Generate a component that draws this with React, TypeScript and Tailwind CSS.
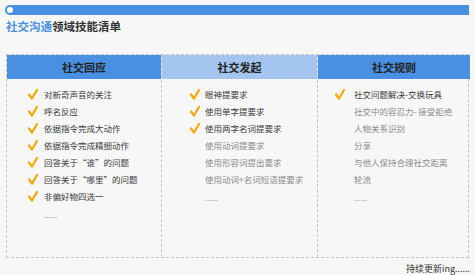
import React from 'react';

type Item = { text: string; done: boolean };

const COLUMNS: { title: string; hatched: boolean; check: string; text: string; items: Item[] }[] = [
  {
    title: '社交回应',
    hatched: false,
    check: 'pl-[21px]',
    text: 'pl-[37px]',
    items: [
      { text: '对新奇声音的关注', done: true },
      { text: '呼名反应', done: true },
      { text: '依据指令完成大动作', done: true },
      { text: '依据指令完成精细动作', done: true },
      { text: '回答关于“谁”的问题', done: true },
      { text: '回答关于“哪里”的问题', done: true },
      { text: '非偏好物四选一', done: true },
    ],
  },
  {
    title: '社交发起',
    hatched: true,
    check: 'pl-[28px]',
    text: 'pl-[43px]',
    items: [
      { text: '眼神提要求', done: true },
      { text: '使用单字提要求', done: true },
      { text: '使用两字名词提要求', done: true },
      { text: '使用动词提要求', done: false },
      { text: '使用形容词提出要求', done: false },
      { text: '使用动词+名词短语提要求', done: false },
    ],
  },
  {
    title: '社交规则',
    hatched: false,
    check: 'pl-[17px]',
    text: 'pl-[36px]',
    items: [
      { text: '社交问题解决-交换玩具', done: true },
      { text: '社交中的容忍力- 接受拒绝', done: false },
      { text: '人物关系识别', done: false },
      { text: '分享', done: false },
      { text: '与他人保持合理社交距离', done: false },
      { text: '轮流', done: false },
    ],
  },
];

function Check() {
  return (
    <svg width="10" height="11" viewBox="0 0 10 11" className="shrink-0">
      <path d="M1 5.5 L4 9.5 L9 1" fill="none" stroke="#f5a800" strokeWidth="2.2" strokeLinecap="round" strokeLinejoin="round" />
    </svg>
  );
}

export default function App() {
  return (
    <div
      className="relative h-[275px] w-[475px] overflow-hidden bg-[#f7f7f7]"
      style={{ fontFamily: '"Noto Sans CJK SC", "Noto Sans", sans-serif' }}
    >
      {/* top bar */}
      <div className="ml-[5px] mt-[5px] flex h-[10px] w-[464px] items-center rounded-l-full bg-[#4a90e2] pl-[2px]">
        <div className="h-[6px] w-[6px] rounded-full bg-white" />
      </div>

      {/* title */}
      <div className="ml-[6px] mt-[3px] text-[11.5px] font-bold leading-[16px] text-[#333]">
        <span className="text-[#4a90e2]">社交沟通</span>领域技能清单
      </div>

      {/* table */}
      <div className="ml-[6px] mt-[20px] grid h-[204px] w-[463px] grid-cols-[154px_156px_153px] border border-dashed border-[#c4c4c4]">
        {COLUMNS.map((col, ci) => (
          <div key={col.title} className={`flex flex-col ${ci > 0 ? 'border-l border-dashed border-[#c4c4c4]' : ''}`}>
            <div
              className={`flex h-[24px] items-center justify-center text-[11px] font-bold text-[#222] ${
                col.hatched
                  ? 'bg-[repeating-linear-gradient(135deg,#a8c8f1_0px,#a8c8f1_2px,#9cc0ee_2px,#9cc0ee_3px)]'
                  : 'bg-[#4a90e2]'
              }`}
            >
              {col.title}
            </div>
            <div className="pt-[7px]">
              {col.items.map((it) => (
                <div key={it.text} className="relative flex h-[17px] items-center">
                  {it.done && (
                    <div className={`absolute left-0 top-[3px] ${col.check}`}>
                      <Check />
                    </div>
                  )}
                  <span
                    className={`${col.text} whitespace-nowrap text-[8.5px] ${it.done ? 'text-[#3a3a3a]' : 'text-[#8a8a8a]'}`}
                  >
                    {it.text}
                  </span>
                </div>
              ))}
              <div className={`${col.text} mt-[1px] h-[17px] text-[8px] leading-[17px] text-[#999]`}>......</div>
            </div>
          </div>
        ))}
      </div>

      {/* footer */}
      <div className="absolute bottom-[0px] right-[5px] text-[9px] leading-[12px] text-[#333]">持续更新ing......</div>
    </div>
  );
}
